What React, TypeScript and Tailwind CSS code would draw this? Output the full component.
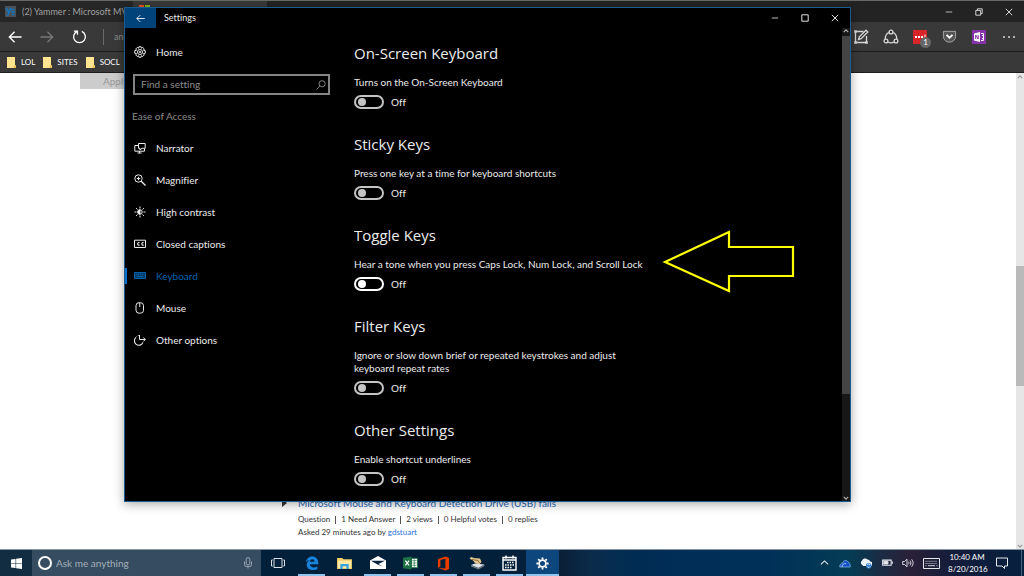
import type { ReactNode } from 'react';

type IconProps = { className?: string };

/* ---------- Settings icons ---------- */

function BackArrow({ className = 'size-3' }: IconProps) {
  return (
    <svg viewBox="0 0 16 16" className={`shrink-0 ${className}`} fill="none" stroke="currentColor" strokeWidth="1.5" aria-hidden="true">
      <path d="M15.5 8H1.5M7.5 2 1.5 8l6 6" />
    </svg>
  );
}

function HomeGearIcon() {
  return (
    <svg viewBox="0 0 24 24" className="size-3" fill="none" stroke="currentColor" strokeWidth="2" aria-hidden="true">
      <path d="M9.8 1.5h4.4l.6 3 2.6-1.7 3.1 3.1-1.6 2.6 3.6.9v5l-3.600.8 1.600 2.700-3.100 3.100-2.600-1.600-.6 3.100H9.800l-.6-3.100-2.600 1.600-3.100-3.100 1.600-2.700-3.600-.8v-5l3.600-.9-1.600-2.600 3.100-3.100 2.600 1.700z" />
      <circle cx="12" cy="12" r="5" />
      <circle cx="12" cy="12" r="1.5" />
    </svg>
  );
}

function NarratorIcon() {
  return (
    <svg viewBox="0 0 12 12" className="size-3" fill="none" stroke="currentColor" aria-hidden="true">
      <path d="M4 3.5H.8v5.700h9.700V6.500M3.500 11h4M5.500 9v2" />
      <path d="M4.500 1.500h6.700v4.800H8L6 8V6.300H4.500z" />
    </svg>
  );
}

function MagnifierIcon() {
  return (
    <svg viewBox="0 0 12 12" className="size-3" fill="none" stroke="currentColor" aria-hidden="true">
      <circle cx="4.5" cy="4.5" r="3.7" />
      <path d="m7.200 7.200 4.300 4.300" strokeWidth="1.3" />
      <path d="M4.500 2.800v3.400M2.800 4.500h3.400" />
    </svg>
  );
}

function ContrastIcon() {
  return (
    <svg viewBox="0 0 12 12" className="size-3" fill="none" stroke="currentColor" aria-hidden="true">
      <circle cx="6" cy="6" r="2.2" />
      <path d="M6 3.800a2.200 2.200 0 0 0 0 4.400z" fill="currentColor" />
      <path d="M6 .5v2M6 9.500v2M.5 6h2M9.500 6h2M2.100 2.100l1.400 1.400M8.500 8.500l1.400 1.400M9.900 2.100 8.500 3.500M3.500 8.500 2.100 9.900" />
    </svg>
  );
}

function CaptionsIcon() {
  return (
    <svg viewBox="0 0 12 12" className="size-3" fill="none" stroke="currentColor" aria-hidden="true">
      <path d="M.5 2.200h11v7.300H.5z" />
      <path d="M5.500 4.700a1.300 1.300 0 1 0 0 2.300M9.700 4.700a1.300 1.300 0 1 0 0 2.300" strokeWidth="1.1" />
    </svg>
  );
}

function KeyboardIcon() {
  return (
    <svg viewBox="0 0 12 12" className="size-3" fill="none" stroke="currentColor" aria-hidden="true">
      <path d="M.5 2.500h11v6H.5z" fill="#003a66" />
      <path d="M2 4.500h8" strokeDasharray="1 1" />
      <path d="M3 6.500h6" />
    </svg>
  );
}

function MouseIcon() {
  return (
    <svg viewBox="0 0 12 12" className="size-3" fill="none" stroke="currentColor" aria-hidden="true">
      <rect x="2" y=".7" width="7.500" height="10.500" rx="3" />
      <path d="M5.750 1v4" />
    </svg>
  );
}

function OptionsIcon() {
  return (
    <svg viewBox="0 0 12 12" className="size-3" fill="none" stroke="currentColor" aria-hidden="true">
      <path d="M2 3.300A4.500 4.500 0 1 0 9 8.600" strokeWidth="1.1" />
      <path d="M2.500 2.500A4.500 4.500 0 0 1 5 1.300" strokeDasharray="1 1" />
      <path d="M5.500 1v4.500h5.800M9.300 3.500l2 2-2 2" />
    </svg>
  );
}

function SearchIcon() {
  return (
    <svg viewBox="0 0 12 12" className="size-[10px]" fill="none" stroke="currentColor" aria-hidden="true">
      <circle cx="7.3" cy="4.5" r="3.7" />
      <path d="M4.700 7.200.7 11.300" />
    </svg>
  );
}

function MinimizeIcon() {
  return (
    <svg viewBox="0 0 10 10" className="size-2" stroke="currentColor" fill="none" aria-hidden="true">
      <path d="M1 5h8" />
    </svg>
  );
}

function CloseIcon() {
  return (
    <svg viewBox="0 0 10 10" className="size-2" stroke="currentColor" strokeWidth="1.2" fill="none" aria-hidden="true">
      <path d="m1 1 8 8M9 1 1 9" />
    </svg>
  );
}

function MaximizeIcon() {
  return (
    <svg viewBox="0 0 10 10" className="size-2" stroke="currentColor" strokeWidth="1.2" fill="none" aria-hidden="true">
      <path d="M1 1h8v8H1z" />
    </svg>
  );
}

function RestoreIcon() {
  return (
    <svg viewBox="0 0 10 10" className="size-2" stroke="currentColor" strokeWidth="1.2" fill="none" aria-hidden="true">
      <path d="M1 3h6v6H1zM3 3V1h6v6H7" />
    </svg>
  );
}

function Chevron({ down = false }: { down?: boolean }) {
  return (
    <svg viewBox="0 0 8 8" className={down ? 'size-[6px] rotate-180' : 'size-[6px]'} fill="none" stroke="currentColor" strokeWidth="1.5" aria-hidden="true">
      <path d="m1 5.500 3-3 3 3" />
    </svg>
  );
}

/* ---------- Shared pieces ---------- */

function IconButton({ label, className, children }: { label: string; className: string; children: ReactNode }) {
  return (
    <button type="button" aria-label={label} className={`flex shrink-0 items-center justify-center ${className}`}>
      {children}
    </button>
  );
}

/* ---------- Browser ---------- */

const favorites = ['LOL', 'SITES', 'SOCL'];

function BrowserChrome() {
  return (
    <header className="shrink-0 text-[#d8d8d8]">
      <div className="flex h-[22px] border-t border-[#686868] bg-[#232323]">
        <div className="flex w-[133px] items-center gap-[6px] bg-[#262626] pl-[5px] text-[9px] whitespace-nowrap text-[#a0a0a0]">
          <svg viewBox="0 0 11 11" className="size-[11px] shrink-0" aria-hidden="true">
            <path d="M0 0h11v11H0z" fill="#4b5156" />
            <path d="m1 2 2.500 4M5.500 2 3 9H1.500M6 3.500h3.500M6 6h4M7 8.500h2.500" stroke="#1674ba" strokeWidth="1.6" fill="none" />
          </svg>
          (2) Yammer : Microsoft MV
        </div>
        <div className="w-[134px] bg-[#393939] pt-1 pl-[6px]">
          <svg viewBox="0 0 11 11" className="size-[11px]" aria-hidden="true">
            <path d="M0 0h5v5H0z" fill="#f25022" />
            <path d="M6 0h5v5H6z" fill="#7fba00" />
            <path d="M0 6h5v5H0z" fill="#00a4ef" />
            <path d="M6 6h5v5H6z" fill="#ffb900" />
          </svg>
        </div>
        <div className="ml-auto flex">
          <IconButton label="Minimize browser" className="w-[30px]"><MinimizeIcon /></IconButton>
          <IconButton label="Restore browser" className="w-[30px]"><RestoreIcon /></IconButton>
          <IconButton label="Close browser" className="w-[30px]"><CloseIcon /></IconButton>
        </div>
      </div>

      <div className="flex h-[29px] items-center bg-[#393939] px-[7px]">
        <IconButton label="Back" className="w-4 text-white"><BackArrow className="size-[14px]" /></IconButton>
        <IconButton label="Forward" className="ml-4 w-4 rotate-180 text-[#777]"><BackArrow className="size-[14px]" /></IconButton>
        <IconButton label="Refresh" className="ml-4 w-4 text-white">
          <svg viewBox="0 0 16 16" className="size-[15px]" fill="none" stroke="currentColor" strokeWidth="1.4" aria-hidden="true">
            <path d="M5.500 2.500a6.300 6.300 0 1 0 5 0M5.800 6V2.300H2" />
          </svg>
        </IconButton>
        <div className="ml-4 h-4 w-px bg-[#6a6a6a]" />
        <span className="ml-[10px] text-[9px] text-[#8a8a8a]">answers.microsoft.com</span>

        <div className="ml-auto flex w-[164px] items-center justify-between">
          <IconButton label="Make a web note" className="w-4">
            <svg viewBox="0 0 16 16" className="size-4" fill="none" stroke="currentColor" strokeWidth="1.3" aria-hidden="true">
              <path d="M2.500 2.500h8M2.500 2.500v11h11V7" />
              <path d="m5.500 10.500.8-2.700L13 1.200l1.800 1.800-6.700 6.700z" />
              <path d="M1.200 1.200h2.600v2.600H1.200zM1.200 12.200h2.600v2.600H1.200zM12.200 12.200h2.600v2.600h-2.600z" fill="currentColor" stroke="none" />
            </svg>
          </IconButton>
          <IconButton label="Share" className="w-4">
            <svg viewBox="0 0 16 16" className="size-4" fill="none" stroke="currentColor" strokeWidth="1.3" aria-hidden="true">
              <circle cx="8" cy="3" r="1.9" />
              <circle cx="3" cy="12" r="1.9" />
              <circle cx="13" cy="12" r="1.9" />
              <path d="M6 3.500C3.500 4.500 2.200 7 2.300 10M10 3.500c2.500 1 3.800 3.500 3.700 6.500M5 13c2 1.200 4 1.200 6 0" />
            </svg>
          </IconButton>
          <IconButton label="LastPass" className="relative w-4">
            <svg viewBox="0 0 14 14" className="size-[14px]" aria-hidden="true">
              <rect width="14" height="14" rx="1" fill="#d9252a" />
              <path d="M2 6h2v2H2zM5 6h2v2H5zM8 6h2v2H8zM11.500 4.500h1v5h-1z" fill="#fff" />
            </svg>
            <span className="absolute top-[7px] left-2 size-[11px] rounded-full bg-[#666] text-center text-[8px] leading-[11px] text-white">1</span>
          </IconButton>
          <IconButton label="Pocket" className="w-4">
            <svg viewBox="0 0 16 16" className="size-[15px]" fill="none" stroke="currentColor" aria-hidden="true">
              <path d="M1.500 2.500h13V8a6.500 6 0 0 1-13 0z" fill="#555" stroke="#aaa" />
              <path d="m4.800 6.300 3.200 3 3.200-3" stroke="#fff" strokeWidth="2" />
            </svg>
          </IconButton>
          <IconButton label="OneNote Clipper" className="w-4">
            <svg viewBox="0 0 14 14" className="size-[14px]" fill="none" stroke="#fff" aria-hidden="true">
              <path d="M0 0h14v14H0z" fill="#8632a8" stroke="none" />
              <path d="M2 3.500 8 2v10l-6-1.500z" fill="#fff" stroke="none" />
              <path d="M3.700 9V5l2.500 4V5" stroke="#8632a8" />
              <path d="M9 3.500h2.500v7H9M10 5.500h2M10 8.500h2" />
            </svg>
          </IconButton>
          <IconButton label="More" className="w-4">
            <svg viewBox="0 0 16 4" className="w-4" fill="currentColor" aria-hidden="true">
              <circle cx="3" cy="2" r="1" />
              <circle cx="8" cy="2" r="1" />
              <circle cx="13" cy="2" r="1" />
            </svg>
          </IconButton>
        </div>
      </div>

      <nav aria-label="Favorites" className="flex h-[22px] items-center gap-2 border-y border-[#1c1c1c] bg-[#393939] pl-[7px]">
        {favorites.map((name) => (
          <a key={name} href="#" className="flex items-center gap-[5px] text-[8px] text-white">
            <svg viewBox="0 0 9 11" className="h-[11px] w-[9px]" aria-hidden="true">
              <path d="M0 0h8v8h1v3H0z" fill="#ffe48f" />
              <path d="M7.500 8H9v3H6.500z" fill="#eebf52" />
            </svg>
            {name}
          </a>
        ))}
      </nav>
    </header>
  );
}

const postMeta = ['Question', '1 Need Answer', '2 views', '0 Helpful votes', '0 replies'];

function ForumPage() {
  return (
    <div className="flex min-h-0 flex-1 bg-white">
      <div className="flex flex-1 flex-col justify-between">
        <button type="button" className="ml-20 h-4 w-20 self-start bg-[#cccccc] pl-[23px] text-left text-[10px] leading-3 text-[#999]">
          Apply
        </button>
        <article className="pb-[10px] pl-[298px] text-[8px] leading-[13px] text-[#333]">
          <h2 className="-ml-4 flex items-center gap-[10px] text-[10px] leading-4 text-[#2468b8]">
            <svg viewBox="0 0 6 8" className="h-2 w-[6px]" aria-hidden="true">
              <path d="M0 0v8l5-4z" fill="#333" />
            </svg>
            <a href="#">Microsoft Mouse and Keyboard Detection Drive (USB) fails</a>
          </h2>
          <ul className="mt-[2px] flex">
            {postMeta.map((item) => (
              <li key={item} className="mr-[5px] flex items-center gap-[5px] after:h-2 after:w-px after:bg-[#555] last:after:hidden">
                {item}
              </li>
            ))}
          </ul>
          <p>
            Asked 29 minutes ago by <a href="#" className="text-[#2672d9]">gdstuart</a>
          </p>
        </article>
      </div>
      <div className="flex w-2 flex-col items-center bg-[#e6e6e6] pt-px text-[#999]">
        <Chevron />
        <div className="min-h-0 flex-[186]" />
        <div className="w-full flex-[119] bg-[#bababa]" />
        <div className="min-h-0 flex-[157]" />
        <Chevron down />
      </div>
    </div>
  );
}

/* ---------- Settings window ---------- */

const menu = [
  { label: 'Narrator', icon: <NarratorIcon /> },
  { label: 'Magnifier', icon: <MagnifierIcon /> },
  { label: 'High contrast', icon: <ContrastIcon /> },
  { label: 'Closed captions', icon: <CaptionsIcon /> },
  { label: 'Keyboard', icon: <KeyboardIcon />, active: true },
  { label: 'Mouse', icon: <MouseIcon /> },
  { label: 'Other options', icon: <OptionsIcon /> },
];

const sections = [
  { id: 'osk', title: 'On-Screen Keyboard', text: 'Turns on the On-Screen Keyboard' },
  { id: 'sticky', title: 'Sticky Keys', text: 'Press one key at a time for keyboard shortcuts' },
  { id: 'toggle', title: 'Toggle Keys', text: 'Hear a tone when you press Caps Lock, Num Lock, and Scroll Lock', hover: true },
  { id: 'filter', title: 'Filter Keys', text: 'Ignore or slow down brief or repeated keystrokes and adjust keyboard repeat rates' },
  { id: 'other', title: 'Other Settings', text: 'Enable shortcut underlines' },
];

function Sidebar() {
  return (
    <aside className="w-[229px] shrink-0 pt-2 text-[10px]">
      <a href="#" className="flex h-8 items-center gap-[10px] pl-[9px]">
        <HomeGearIcon />
        Home
      </a>
      <label className="mt-[6px] mr-6 ml-2 flex h-[21px] items-center border-2 border-[#858585] pr-[2px] pl-[6px] text-[#9a9a9a]">
        <input
          type="search"
          aria-label="Find a setting"
          placeholder="Find a setting"
          className="min-w-0 flex-1 bg-transparent outline-none placeholder:text-[#8c8c8c]"
        />
        <SearchIcon />
      </label>
      <h2 className="mt-[5px] flex h-8 items-center pl-[7px] text-[#8a8a8a]">Ease of Access</h2>
      <nav aria-label="Ease of Access">
        {menu.map((item) => (
          <a
            key={item.label}
            href="#"
            aria-current={item.active ? 'page' : undefined}
            className={
              item.active
                ? 'relative flex h-8 items-center gap-[10px] pl-[9px] text-[#0063b1] before:absolute before:left-0 before:h-4 before:w-[2px] before:bg-[#0a6fc9]'
                : 'flex h-8 items-center gap-[10px] pl-[9px]'
            }
          >
            {item.icon}
            {item.label}
          </a>
        ))}
      </nav>
    </aside>
  );
}

function SettingsWindow() {
  return (
    <section
      aria-label="Settings"
      className="absolute top-[7px] right-[173px] bottom-[74px] left-[124px] flex flex-col border border-[#1d5c92] bg-black text-[#ececec] shadow-[0_2px_10px_rgba(0,0,0,0.35)]"
    >
      <div className="flex h-5 shrink-0">
        <IconButton label="Back to previous page" className="w-[31px] bg-[#00427a] text-white"><BackArrow className="size-[9px]" /></IconButton>
        <h1 className="ml-2 flex items-center text-[9px]">Settings</h1>
        <div className="ml-auto flex">
          <IconButton label="Minimize" className="w-[30px]"><MinimizeIcon /></IconButton>
          <IconButton label="Maximize" className="w-[30px]"><MaximizeIcon /></IconButton>
          <IconButton label="Close" className="w-[30px]"><CloseIcon /></IconButton>
        </div>
      </div>

      <div className="flex min-h-0 flex-1">
        <Sidebar />
        <main className="flex min-w-0 flex-1 flex-col gap-[23px] overflow-hidden pt-[13px]">
          {sections.map((s) => (
            <section key={s.id} className="flex flex-col">
              <h2 className="font-['Open_Sans','Noto_Sans',sans-serif] text-[15px] leading-6">{s.title}</h2>
              <p className="mt-[11px] max-w-[300px] text-[10px] leading-[13px]">{s.text}</p>
              <label className="mt-[6px] flex h-[14px] items-center gap-[7px] self-start text-[10px]">
                <input
                  type="checkbox"
                  role="switch"
                  aria-label={s.title}
                  className={
                    s.hover
                      ? 'flex h-[14px] w-[30px] appearance-none items-center rounded-full border-2 border-white pl-[2px] before:size-2 before:rounded-full before:bg-white'
                      : 'flex h-[14px] w-[30px] appearance-none items-center rounded-full border-2 border-[#c4c4c4] pl-[2px] before:size-2 before:rounded-full before:bg-[#c4c4c4]'
                  }
                />
                Off
              </label>
            </section>
          ))}
        </main>
        <div className="flex w-2 shrink-0 flex-col items-center bg-[#171717] text-[#b0b0b0]">
          <Chevron />
          <div className="mt-[2px] w-full flex-[358] bg-[#444]" />
          <div className="min-h-0 flex-[101]" />
          <Chevron down />
        </div>
      </div>

      <svg viewBox="0 0 137 67" className="absolute top-[220px] left-[535px] h-[67px] w-[137px]" fill="none" stroke="#ffff00" strokeWidth="2.2" aria-hidden="true">
        <path d="M5 34 69 4v15h64v29H69v15z" />
      </svg>
    </section>
  );
}

/* ---------- Taskbar ---------- */

const apps = [
  {
    name: 'Microsoft Edge',
    open: true,
    icon: (
      <svg viewBox="0 0 16 16" className="size-[14px]" aria-hidden="true">
        <path d="M1 7.500C1.500 3 4.500.5 8.200.5c4.500 0 7 3 7 7.500v1.500H5.500c.2 2.500 2.200 3.500 4.500 3.500 1.500 0 3-.4 4.200-1.100v3C13 15.600 11 16 9 16c-4.500 0-7-2.500-7-6 0-2.500 1.300-4.500 3.700-5.500C3.500 4.700 2 5.700 1 7.500zm4.600-1h5.200c0-1.700-.8-2.800-2.500-2.800S5.900 5 5.600 6.500z" fill="#1683dd" fillRule="evenodd" />
      </svg>
    ),
  },
  {
    name: 'File Explorer',
    open: false,
    icon: (
      <svg viewBox="0 0 16 14" className="h-[13px] w-[15px]" aria-hidden="true">
        <path d="M0 1h5.500L7 2.500h9V13H0z" fill="#f5cf68" />
        <path d="M1 4h14v8H1z" fill="#ffe9a6" />
        <path d="M3.500 13V7.500h9V13H10v-3H6v3z" fill="#36a4dc" />
      </svg>
    ),
  },
  {
    name: 'Mail',
    open: true,
    icon: (
      <svg viewBox="0 0 16 14" className="h-[14px] w-4" aria-hidden="true">
        <path d="M0 4.500 8 0l8 4.500V13H0z" fill="#fff" />
        <path d="M1 4.800h14L8.500 8l4 2.500-5-2z" fill="#06233c" />
      </svg>
    ),
  },
  {
    name: 'Excel',
    open: true,
    icon: (
      <svg viewBox="0 0 16 14" className="h-[14px] w-[15px]" aria-hidden="true">
        <path d="M9 2h6.500v10H9z" fill="#fff" stroke="#1e7145" />
        <path d="M10 4.500h4.500M10 7h4.500M10 9.500h4.500M12 3v8" stroke="#1e7145" strokeWidth=".7" />
        <path d="m0 1.500 9-1.500v14l-9-1.500z" fill="#1e7145" />
        <path d="m2.500 4.500 4 5M6.500 4.500l-4 5" stroke="#fff" strokeWidth="1.3" />
      </svg>
    ),
  },
  {
    name: 'Office',
    open: true,
    icon: (
      <svg viewBox="0 0 14 16" className="h-[15px] w-[13px]" aria-hidden="true">
        <path d="m1 3.500 8-3L13 2v12l-4 1.500-8-2.800L9 13.500V3L3.700 4.300v7L1 12.500z" fill="#eb3c00" />
      </svg>
    ),
  },
  {
    name: 'Scanner',
    open: true,
    icon: (
      <svg viewBox="0 0 16 14" className="h-[14px] w-4" aria-hidden="true">
        <path d="m.5 2.500 1.500-1.500 3 1 6 .5 1.500 3.500L10 8.500 6 7 4 4.500z" fill="#e2c58e" />
        <path d="m3 3.500 6 1 1.500 2.500" stroke="#8d6b37" fill="none" />
        <path d="m2 9 4-1.500 9.500 1L9.500 12z" fill="#dfe3e6" />
        <path d="m2 9 7.500 3 6-3.500V10l-6 3.500L2 10.500z" fill="#707a82" />
      </svg>
    ),
  },
  {
    name: 'Calendar',
    open: true,
    icon: (
      <svg viewBox="0 0 15 16" className="h-4 w-[15px]" fill="none" stroke="#fff" aria-hidden="true">
        <path d="M1 2.500h13v12.500H1zM1 5h13" strokeWidth="1.4" />
        <path d="M4 .5v3M11 .5v3" strokeWidth="1.5" />
        <path d="M5 7.500h7.500M3 10h9.500M3 12.500h7" strokeWidth="1.5" strokeDasharray="1.5 1" />
      </svg>
    ),
  },
  {
    name: 'Settings',
    open: true,
    active: true,
    icon: (
      <svg viewBox="0 0 16 16" className="size-[13px]" fill="none" stroke="#fff" aria-hidden="true">
        <circle cx="8" cy="8" r="4.2" strokeWidth="2.2" />
        <path d="M8 .5v2.500M8 13v2.500M.5 8H3M13 8h2.500M2.700 2.700l1.800 1.800M11.500 11.500l1.800 1.800M13.300 2.700l-1.800 1.800M4.500 11.500l-1.800 1.800" strokeWidth="2.2" />
      </svg>
    ),
  },
];

function Tray() {
  return (
    <div className="ml-auto flex items-center text-[#e4e8ec]">
      <div className="flex items-center gap-[7px]">
        <IconButton label="Show hidden icons" className="w-[14px]">
          <svg viewBox="0 0 10 6" className="w-[9px]" fill="none" stroke="currentColor" strokeWidth="1.2" aria-hidden="true"><path d="m1 5 4-4 4 4" /></svg>
        </IconButton>
        <IconButton label="OneDrive" className="w-[14px]">
          <svg viewBox="0 0 12 9" className="w-3" aria-hidden="true">
            <path d="M.7 8C.7 5 2.500 4 3.500 4.200 4 1.500 7.500.3 9 3c1.500.3 2.300 2.500 2.300 5z" fill="#1650c8" stroke="#8abdf0" strokeWidth=".7" />
            <path d="M3.200 8c-.3-2.500 1.800-4 4-3.300" stroke="#c7e0fa" strokeWidth=".8" fill="none" />
          </svg>
        </IconButton>
        <IconButton label="Sync" className="w-[14px]">
          <svg viewBox="0 0 12 11" className="w-3" aria-hidden="true">
            <path d="M2.500 7A2.300 2.300 0 0 1 2 2.800 3.200 3.200 0 0 1 7.500 1.500a3 3 0 0 1 2.700 2A2 2 0 0 1 10 8H3z" fill="#eef3f8" />
            <circle cx="8.7" cy="7.7" r="2.8" fill="#2b7cd0" />
            <path d="M7.300 7a1.600 1.600 0 0 1 3 0M10 8.500a1.600 1.600 0 0 1-2.800 0" stroke="#fff" strokeWidth=".8" fill="none" />
          </svg>
        </IconButton>
        <IconButton label="Battery" className="w-[14px]">
          <svg viewBox="0 0 12 8" className="w-[11px]" fill="none" stroke="currentColor" aria-hidden="true">
            <path d="M.7 1.200h9.300v5.600H.7z" strokeWidth="1.2" />
            <path d="M2 2.500h4.500v3H2z" fill="currentColor" />
            <path d="M11.200 2.800v2.400" strokeWidth="1.3" />
          </svg>
        </IconButton>
        <IconButton label="Volume" className="w-[14px]">
          <svg viewBox="0 0 12 10" className="w-3" fill="none" stroke="currentColor" strokeWidth=".9" aria-hidden="true">
            <path d="M.7 3.500h1.800L5 1.200v7.600L2.500 6.500H.7z" />
            <path d="M6.500 3.700c.6.800.6 1.800 0 2.600M8 2.500c1.200 1.500 1.200 3.500 0 5M9.600 1.300c2 2.200 2 5.200 0 7.400" />
          </svg>
        </IconButton>
        <IconButton label="Touch keyboard" className="w-[18px]">
          <svg viewBox="0 0 17 11" className="w-[17px]" fill="none" stroke="currentColor" aria-hidden="true">
            <path d="M.5 .5h16v10H.5z" />
            <path d="M2.500 3.300h12M2.500 5.500h12" strokeDasharray="1 1" strokeWidth=".9" />
            <path d="M2.500 7.700h1M5 7.700h7M13.500 7.700h1" strokeWidth=".9" />
          </svg>
        </IconButton>
      </div>
      <time dateTime="2016-08-20T10:40" className="ml-2 w-[38px] text-center text-[8px] leading-3 whitespace-nowrap text-white">
        <div>10:40 AM</div>
        <div>8/20/2016</div>
      </time>
      <IconButton label="Action Center" className="mr-[13px] ml-[10px] w-3">
        <svg viewBox="0 0 12 12" className="size-3" fill="none" stroke="currentColor" aria-hidden="true">
          <path d="M.5 1h11v8H8.500v2.500L6 9H.5z" />
        </svg>
      </IconButton>
      <div className="mr-[2px] h-full w-px bg-[#47657f]" />
    </div>
  );
}

function Taskbar() {
  return (
    <footer className="flex h-[27px] shrink-0 border-t border-[#8796a4] bg-[linear-gradient(90deg,#03203a_0%,#03203a_50%,#0a2038_55%,#0b2c4c_58%,#002c54_62%,#003058_75%,#053c54_83%,#1a2c44_86%,#2a2038_89%,#141c3a_93%,#06203e_100%)]">
      <IconButton label="Start" className="w-8 bg-[#122d42]">
        <svg viewBox="0 0 12 12" className="size-[11px]" fill="#fff" aria-hidden="true">
          <path d="m0 1.700 5-.7v4.700H0zM5.600.9 12 0v5.700H5.600zM0 6.300h5V11l-5-.7zM5.600 6.300H12V12l-6.400-.9z" />
        </svg>
      </IconButton>
      <label className="flex w-[229px] shrink-0 items-center gap-1 bg-[#364c60] pr-2 pl-[6px]">
        <span className="size-[14px] shrink-0 rounded-full border-2 border-white" />
        <input
          type="text"
          aria-label="Ask me anything"
          placeholder="Ask me anything"
          className="min-w-0 flex-1 bg-transparent text-[10px] outline-none placeholder:text-[#a3afba]"
        />
        <svg viewBox="0 0 10 13" className="h-3 w-[10px]" fill="none" stroke="#a3afba" aria-hidden="true">
          <rect x="3" y=".7" width="4" height="8" rx="2" />
          <path d="M1.200 5v3.200a2 2 0 0 0 2 2h3.600a2 2 0 0 0 2-2V5M5 10.200V12.500" />
        </svg>
      </label>
      <IconButton label="Task View" className="w-[34px] text-[#dce2e8]">
        <svg viewBox="0 0 14 12" className="w-[14px]" fill="none" stroke="currentColor" aria-hidden="true">
          <path d="M3 1.500h8v9H3zM1.700 3H.5v6h1.200M12.300 3h1.200v6h-1.200" />
        </svg>
      </IconButton>
      {apps.map((app) => (
        <button
          key={app.name}
          type="button"
          aria-label={app.name}
          className={
            app.active
              ? 'relative flex w-[33px] shrink-0 items-center justify-center bg-[#0d467c]'
              : 'relative flex w-[33px] shrink-0 items-center justify-center'
          }
        >
          {app.icon}
          {app.open && (
            <span className={app.active ? 'absolute inset-x-0 bottom-0 h-[2px] bg-[#8ec4ee]' : 'absolute inset-x-[3px] bottom-0 h-[2px] bg-[#8ec4ee]'} />
          )}
        </button>
      ))}
      <Tray />
    </footer>
  );
}

export default function App() {
  return (
    <div className="relative flex h-screen flex-col overflow-hidden font-['Lato','Open_Sans',sans-serif] [font-variant-ligatures:none]">
      <BrowserChrome />
      <ForumPage />
      <Taskbar />
      <SettingsWindow />
    </div>
  );
}
